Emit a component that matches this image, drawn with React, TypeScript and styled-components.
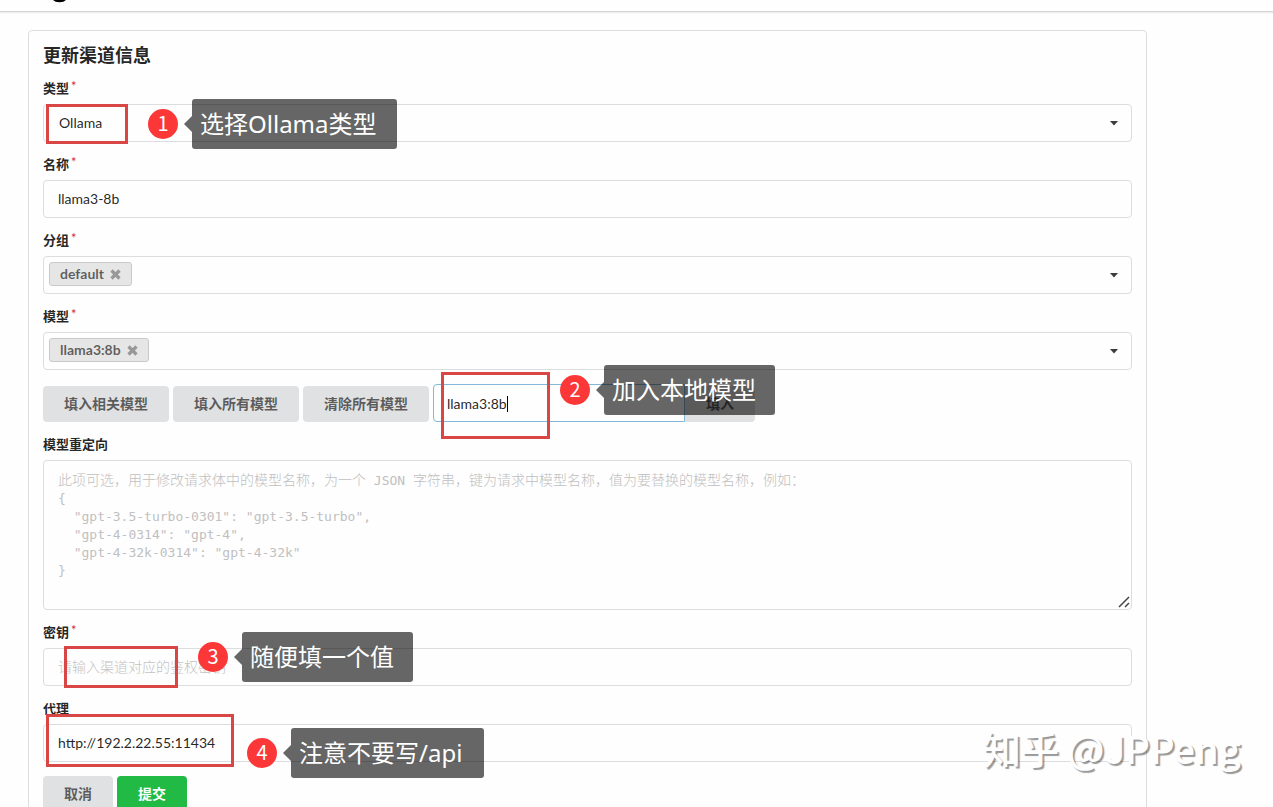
import React, { useState } from "react";
import styled, { createGlobalStyle } from "styled-components";

const GlobalStyle = createGlobalStyle`
  *, *::before, *::after { box-sizing: border-box; }
  html, body { margin: 0; padding: 0; }
  body {
    background: #fefefe;
    color: rgba(0, 0, 0, 0.87);
    font: 14px/20px Lato, "Noto Sans CJK SC", sans-serif;
  }
  button, input, select, textarea { font: inherit; color: inherit; }
`;

const line = "#dcddde";

const Page = styled.div`
  position: relative;
  height: 100vh;
  overflow: auto;
  scrollbar-width: none;
`;

const TopBar = styled.header`
  height: 12px;
  overflow: hidden;
  border-bottom: 1px solid #d4d4d5;
`;

const LogoMark = styled.svg`
  display: block;
  margin-left: 52px;
`;

const BarShade = styled.div`
  height: 18px;
  background: linear-gradient(#e9e9e9, #fefefe 2px);
`;

const Main = styled.main`
  padding: 0 126px 0 28px;
`;

const Segment = styled.section`
  padding: 14px;
  border: 1px solid ${line};
  border-radius: 4px;
  background: #fefefe;
`;

const Title = styled.h3`
  margin: 0 0 14px;
  font-size: 18px;
  line-height: 21px;
  font-weight: 700;
`;

const Field = styled.div`
  margin-bottom: 14px;
`;

const Label = styled.label<{ $required?: boolean }>`
  display: block;
  height: 18px;
  margin-bottom: 6px;
  font-size: 13px;
  line-height: 16px;
  font-weight: 700;
  &::after {
    content: ${(p) => (p.$required ? '"*"' : "none")};
    margin-left: 2px;
    color: #db2828;
    font-weight: 400;
    line-height: 13px;
    vertical-align: top;
  }
`;

const TextInput = styled.input`
  display: block;
  width: 100%;
  height: 38px;
  padding: 0 14px 2px;
  border: 1px solid ${line};
  border-radius: 4px;
  background: #fefefe;
  outline: none;
  &::placeholder { color: #c3c3c3; font-weight: 300; }
`;

const Dropdown = styled.div`
  position: relative;
  display: flex;
  align-items: center;
  height: 38px;
  padding: 0 5px;
  border: 1px solid ${line};
  border-radius: 4px;
  background: #fefefe;
`;

const Select = styled.select`
  flex: 1;
  height: 36px;
  padding: 0 10px;
  border: 0;
  outline: none;
  background: transparent;
  appearance: none;
`;

const Caret = styled.svg`
  position: absolute;
  right: 13px;
  top: 16px;
  pointer-events: none;
`;

const Tag = styled.span`
  display: flex;
  align-items: center;
  gap: 6px;
  height: 24px;
  margin-bottom: 2px;
  padding: 0 10px;
  border: 1px solid #c9cacb;
  border-radius: 3px;
  background: #e6e6e6;
  color: rgba(0, 0, 0, 0.6);
  font-weight: 700;
`;

const TagClose = styled.button`
  display: flex;
  padding: 0;
  border: 0;
  background: none;
  color: #989898;
`;

const Row = styled.div`
  display: flex;
  align-items: flex-end;
  gap: 4px;
  margin-bottom: 14px;
`;

const Button = styled.button<{ $tone?: "green"; $attached?: boolean }>`
  height: 36px;
  padding: 0 21px;
  border: 0;
  border-radius: ${(p) => (p.$attached ? "0 4px 4px 0" : "4px")};
  background: ${(p) => (p.$tone === "green" ? "#21ba45" : "#e0e1e2")};
  color: ${(p) => (p.$tone === "green" ? "#fff" : "rgba(0, 0, 0, 0.6)")};
  font-weight: 700;
  white-space: nowrap;
`;

const ActionInput = styled.div`
  display: flex;
  align-items: flex-end;
`;

const ModelInput = styled(TextInput)`
  width: 252px;
  padding: 0 13px;
  border-color: #85b7d9;
  border-radius: 4px 0 0 4px;
`;

const TextCaret = styled.span`
  position: absolute;
  left: 507px;
  top: 396px;
  width: 1px;
  height: 16px;
  background: #000;
`;

const AreaBox = styled.div`
  position: relative;
`;

const Area = styled.textarea`
  display: block;
  width: 100%;
  height: 150px;
  padding: 11px 14px;
  border: 1px solid ${line};
  border-radius: 4px;
  background: #fefefe;
  outline: none;
  resize: none;
`;

const Hint = styled.div`
  position: absolute;
  inset: 10px 15px;
  color: #c0c0c0;
  font: 13px/18px "DejaVu Sans Mono", "Noto Sans CJK SC", monospace;
  white-space: pre-wrap;
  pointer-events: none;
`;

const HintText = styled.span`
  font-size: 14px;
  font-family: "Noto Sans CJK SC", sans-serif;
  font-weight: 300;
`;

const Grip = styled.svg`
  position: absolute;
  right: 2px;
  bottom: 2px;
  pointer-events: none;
`;

const Highlight = styled.div<{ $x: number; $y: number; $w: number; $h: number }>`
  position: absolute;
  left: ${(p) => p.$x}px;
  top: ${(p) => p.$y}px;
  width: ${(p) => p.$w}px;
  height: ${(p) => p.$h}px;
  border: 3px solid #d84646;
  pointer-events: none;
`;

const Callout = styled.div<{ $x: number; $y: number }>`
  position: absolute;
  left: ${(p) => p.$x}px;
  top: ${(p) => p.$y}px;
  display: flex;
  align-items: center;
  pointer-events: none;
`;

const Badge = styled.span`
  width: 30px;
  height: 30px;
  border-radius: 50%;
  background: #fc3738;
  color: #fff;
  font: 20px/28px "Noto Sans CJK SC", sans-serif;
  text-align: center;
`;

const Arrow = styled.span`
  margin-left: 6px;
  border: 8px solid transparent;
  border-left-width: 0;
  border-right-color: rgba(0, 0, 0, 0.6);
`;

const Bubble = styled.span<{ $w: number }>`
  width: ${(p) => p.$w}px;
  height: 50px;
  padding-left: 8px;
  border-radius: 3px;
  background: rgba(0, 0, 0, 0.6);
  color: #fff;
  font: 24px/50px "Noto Sans", "Noto Sans CJK SC", sans-serif;
  white-space: nowrap;
`;

const Watermark = styled.div`
  position: absolute;
  left: 983px;
  top: 723px;
  color: #fefefe;
  font: 500 38px/50px "Noto Sans CJK SC", sans-serif;
  text-shadow: 2px 2px 1px rgba(0, 0, 0, 0.4);
  white-space: nowrap;
  pointer-events: none;
`;

const DownCaret = () => (
  <Caret width="8" height="5" viewBox="0 0 8 5" aria-hidden="true">
    <path d="M0 0h8L4 4.5z" fill="#3c3c3c" />
  </Caret>
);

function Chip({ text }: { text: string }) {
  return (
    <Tag>
      {text}
      <TagClose type="button" aria-label={`删除 ${text}`}>
        <svg width="11" height="11" viewBox="0 0 11 11" aria-hidden="true">
          <path d="M1.500 1.500l8 8M9.500 1.500l-8 8" stroke="currentColor" strokeWidth="3.2" />
        </svg>
      </TagClose>
    </Tag>
  );
}

const steps = [
  { text: "选择Ollama类型", x: 148, y: 99, w: 205, box: [46, 104, 82, 40] },
  { text: "加入本地模型", x: 560, y: 365, w: 171, box: [441, 372, 109, 67] },
  { text: "随便填一个值", x: 198, y: 632, w: 171, box: [64, 646, 114, 42] },
  { text: "注意不要写/api", x: 247, y: 728, w: 193, box: [46, 714, 188, 53] },
];

export default function App() {
  const [name, setName] = useState("llama3-8b");
  const [model, setModel] = useState("llama3:8b");
  const [mapping, setMapping] = useState("");
  const [secret, setSecret] = useState("");
  const [proxy, setProxy] = useState("http://192.2.22.55:11434");

  return (
    <Page>
      <GlobalStyle />
      <TopBar>
        <LogoMark width="16" height="3" viewBox="0 0 16 3" aria-hidden="true">
          <path d="M1 0Q3 2.200 7.500 2.200T14 0z" fill="#000" />
        </LogoMark>
      </TopBar>
      <BarShade />
      <Main>
        <Segment>
          <Title>更新渠道信息</Title>
          <Field>
            <Label htmlFor="type" $required>类型</Label>
            <Dropdown>
              <Select id="type" defaultValue="Ollama">
                <option>Ollama</option>
              </Select>
              <DownCaret />
            </Dropdown>
          </Field>
          <Field>
            <Label htmlFor="name" $required>名称</Label>
            <TextInput id="name" value={name} onChange={(e) => setName(e.target.value)} />
          </Field>
          <Field>
            <Label as="div" id="group-label" $required>分组</Label>
            <Dropdown role="group" aria-labelledby="group-label">
              <Chip text="default" />
              <DownCaret />
            </Dropdown>
          </Field>
          <Field>
            <Label as="div" id="models-label" $required>模型</Label>
            <Dropdown role="group" aria-labelledby="models-label">
              <Chip text="llama3:8b" />
              <DownCaret />
            </Dropdown>
          </Field>
          <Row>
            <Button type="button">填入相关模型</Button>
            <Button type="button">填入所有模型</Button>
            <Button type="button">清除所有模型</Button>
            <ActionInput>
              <ModelInput aria-label="自定义模型" value={model} onChange={(e) => setModel(e.target.value)} />
              <Button type="button" $attached>填入</Button>
            </ActionInput>
          </Row>
          <Field>
            <Label htmlFor="mapping">模型重定向</Label>
            <AreaBox>
              <Area id="mapping" value={mapping} onChange={(e) => setMapping(e.target.value)} />
              {mapping === "" && (
                <Hint>
                  <HintText>此项可选，用于修改请求体中的模型名称，为一个</HintText>
                  {" JSON "}
                  <HintText>字符串，键为请求中模型名称，值为要替换的模型名称，例如：</HintText>
                  {`
{
  "gpt-3.5-turbo-0301": "gpt-3.5-turbo",
  "gpt-4-0314": "gpt-4",
  "gpt-4-32k-0314": "gpt-4-32k"
}`}
                </Hint>
              )}
              <Grip width="12" height="12" viewBox="0 0 12 12" aria-hidden="true">
                <path d="M1 11L11 1M7 11l4-4" stroke="#444" strokeWidth="1.5" />
              </Grip>
            </AreaBox>
          </Field>
          <Field>
            <Label htmlFor="secret" $required>密钥</Label>
            <TextInput
              id="secret"
              placeholder="请输入渠道对应的鉴权密钥"
              value={secret}
              onChange={(e) => setSecret(e.target.value)}
            />
          </Field>
          <Field>
            <Label htmlFor="proxy">代理</Label>
            <TextInput id="proxy" value={proxy} onChange={(e) => setProxy(e.target.value)} />
          </Field>
          <Row>
            <Button type="button">取消</Button>
            <Button type="button" $tone="green">提交</Button>
          </Row>
        </Segment>
      </Main>
      <TextCaret />
      {steps.map((s, i) => (
        <React.Fragment key={s.text}>
          <Highlight $x={s.box[0]} $y={s.box[1]} $w={s.box[2]} $h={s.box[3]} />
          <Callout $x={s.x} $y={s.y}>
            <Badge>{i + 1}</Badge>
            <Arrow />
            <Bubble $w={s.w}>{s.text}</Bubble>
          </Callout>
        </React.Fragment>
      ))}
      <Watermark>知乎 @JPPeng</Watermark>
    </Page>
  );
}
